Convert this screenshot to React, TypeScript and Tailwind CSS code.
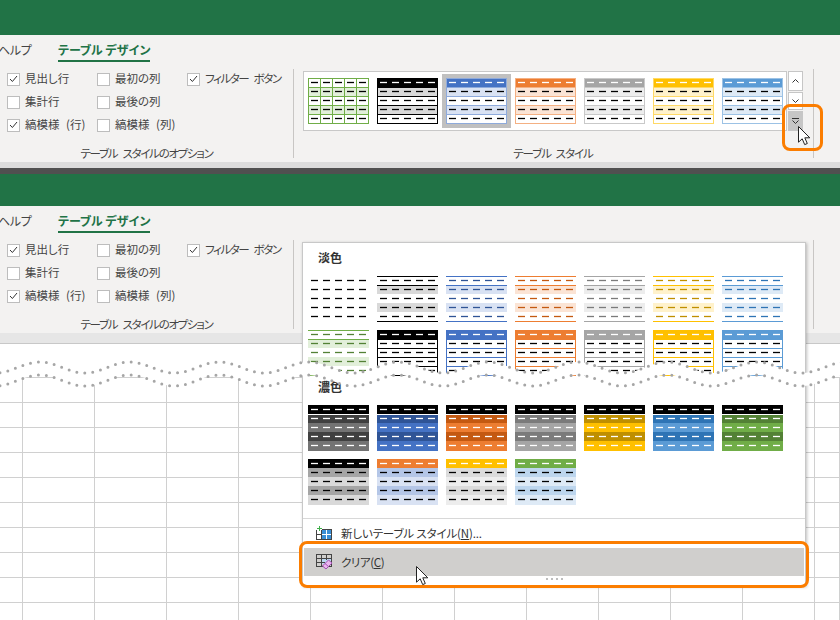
import React from "react";

interface TileProps {
  rows: string[];
  dash?: string[];
  lines?: string;
  lineAt?: number[];
  box?: string;
  grid?: boolean;
}

const ROW_Y = [0, 9, 18, 27, 36];
const ROW_H = [9, 9, 9, 9, 10];
const DASH_X = [3, 15, 27, 39, 51];

const TableTile = ({ rows, dash = [], lines, lineAt = [0, 9, 18, 27, 36, 45], box, grid }: TileProps) => (
  <svg width="61" height="46" viewBox="0 0 61 46" className="block">
    <g shapeRendering="crispEdges">
      {rows.map((fill, i) => (
        <rect key={i} x="0" y={ROW_Y[i]} width="61" height={ROW_H[i]} fill={fill} />
      ))}
      {lines && lineAt.map((y) => <rect key={y} x="0" y={y} width="61" height="1" fill={lines} />)}
      {box && (
        <>
          <rect x="0" y="0" width="1" height="46" fill={box} />
          <rect x="60" y="0" width="1" height="46" fill={box} />
        </>
      )}
      {grid && [12, 24, 36, 48].map((x) => <rect key={x} x={x} y="0" width="1" height="46" fill={lines} />)}
    </g>
    {ROW_Y.map((y, i) =>
      DASH_X.map((x) => <rect key={`${i}-${x}`} x={x} y={y + 3.85} width="7" height="1.3" fill={dash[i] ?? "#000"} />),
    )}
  </svg>
);

const W = "#ffffff";
const K = "#000000";

// header filled, inner lines, banded body
const medium = (head: string, line: string, band: string): TileProps => ({
  rows: [head, band, W, band, W],
  dash: [W, K, K, K, K],
  lines: line,
  box: line,
});

// only top, header and bottom rules
const light = (line: string, dash: string, band: string): TileProps => ({
  rows: [W, band, W, band, W],
  dash: [dash, dash, dash, dash, dash],
  lines: line,
  lineAt: [0, 9, 45],
});

const dark = (low: string, high: string): TileProps => ({
  rows: [K, low, high, low, high],
  dash: [W, W, W, W, W],
  lines: W,
  lineAt: [9],
});

const banded = (head: string, a: string, b: string): TileProps => ({
  rows: [head, a, b, a, b],
  dash: [W, K, K, K, K],
});

const GALLERY: TileProps[] = [
  { rows: [W, "#e2efda", W, "#e2efda", W], lines: "#70ad47", box: "#70ad47", grid: true },
  medium(K, K, "#d9d9d9"),
  { ...medium("#4472c4", "#8eaadb", "#d9e2f3") },
  medium("#ed7d31", "#f4b083", "#fbe4d5"),
  medium("#a5a5a5", "#c9c9c9", "#ededed"),
  medium("#ffc000", "#ffd966", "#fff2cc"),
  medium("#5b9bd5", "#9cc2e5", "#deeaf6"),
];

const LIGHT: TileProps[] = [
  { rows: [W, W, W, W, W] },
  light(K, K, "#d9d9d9"),
  light("#4472c4", "#2f5496", "#d9e2f3"),
  light("#ed7d31", "#c45911", "#fbe4d5"),
  light("#a5a5a5", "#7b7b7b", "#ededed"),
  light("#ffc000", "#bf8f00", "#fff2cc"),
  light("#5b9bd5", "#2e74b5", "#deeaf6"),
  light("#70ad47", "#538135", "#e2efda"),
  medium(K, K, W),
  medium("#4472c4", "#4472c4", W),
  medium("#ed7d31", "#ed7d31", W),
  medium("#a5a5a5", "#a5a5a5", W),
  medium("#ffc000", "#ffc000", W),
  medium("#5b9bd5", "#5b9bd5", W),
];

const DARK: TileProps[] = [
  dark("#404040", "#737373"),
  dark("#2f5496", "#4472c4"),
  dark("#c45911", "#ed7d31"),
  dark("#7b7b7b", "#a5a5a5"),
  dark("#bf8f00", "#ffc000"),
  dark("#2e74b5", "#5b9bd5"),
  dark("#538135", "#70ad47"),
  banded(K, "#a5a5a5", "#d9d9d9"),
  banded("#ed7d31", "#b4c6e7", "#d9e2f3"),
  banded("#ffc000", "#dbdbdb", "#ededed"),
  banded("#70ad47", "#bdd6ee", "#deeaf6"),
];

const CheckOption = ({ label, checked, className = "" }: { label: string; checked?: boolean; className?: string }) => (
  <div className="flex h-5 items-center gap-[5px] whitespace-nowrap">
    <span className="flex h-[13px] w-[13px] items-center justify-center border border-[#bdbdbd] bg-white">
      {checked && (
        <svg width="9" height="8" viewBox="0 0 9 8" fill="none">
          <path d="M1 4l2.4 2.5L8 1" stroke="#333" strokeWidth="1" />
        </svg>
      )}
    </span>
    <span className={className}>{label}</span>
  </div>
);

const ScrollButton = ({ h, active, children }: { h: string; active?: boolean; children: React.ReactNode }) => (
  <div className={`flex w-[15px] items-center justify-center border border-[#c6c6c6] ${h} ${active ? "bg-[#c6c6c6]" : "bg-white"}`}>
    {children}
  </div>
);

const Gallery = () => (
  <div className="mt-[2px] ml-[9px] flex">
    <div className="flex h-[60px] w-[484px] border border-[#c8c8c8] bg-white pt-[2px]">
      {GALLERY.map((t, i) => (
        <div key={i} className={`h-[54px] w-[69px] shrink-0 p-1 ${i === 2 ? "bg-[#c0c0c0]" : ""}`}>
          <TableTile {...t} />
        </div>
      ))}
    </div>
    <div className="ml-[1px] flex flex-col gap-[1px]">
      <ScrollButton h="h-[20px]">
        <svg width="7" height="4" viewBox="0 0 7 4" fill="none">
          <path d="M.5 3.5l3-3 3 3" stroke="#333" />
        </svg>
      </ScrollButton>
      <ScrollButton h="h-[18px]">
        <svg width="7" height="4" viewBox="0 0 7 4" fill="none">
          <path d="M.5.5l3 3 3-3" stroke="#333" />
        </svg>
      </ScrollButton>
      <ScrollButton h="h-[20px]" active>
        <svg width="7" height="6" viewBox="0 0 7 6" fill="none">
          <path d="M0 .5h7M.5 2.5l3 3 3-3" stroke="#333" />
        </svg>
      </ScrollButton>
    </div>
  </div>
);

const Ribbon = ({ expanded }: { expanded?: boolean }) => (
  <div className="h-[127px] overflow-hidden bg-[#f3f2f1] text-[11.5px] text-[#444]">
    <div className="flex h-[34px] items-start pt-[6px] text-[12px]">
      <span className="-ml-[2px] w-[60px] leading-[18px] tracking-[-0.3px]">ヘルプ</span>
      <span className="border-b-2 border-[#217346] pb-[1px] leading-[18px] font-bold text-[#217346]">
        テーブル デザイン
      </span>
    </div>
    <div className="flex">
      <div className="w-[293px]">
        <div className="grid grid-cols-[90px_90px_auto] gap-y-[3px] pl-[7px]">
          <CheckOption label="見出し行" checked />
          <CheckOption label="最初の列" />
          <CheckOption label="フィルター ボタン" checked className="tracking-[-1.4px] [word-spacing:4px]" />
          <CheckOption label="集計行" />
          <CheckOption label="最後の列" />
          <span />
          <CheckOption label="縞模様 (行)" checked className="[word-spacing:4px]" />
          <CheckOption label="縞模様 (列)" className="[word-spacing:4px]" />
        </div>
        <div className="mt-[9px] text-center leading-[18px] tracking-[-1.3px] [word-spacing:4px]">
          テーブル スタイルのオプション
        </div>
      </div>
      <div className="h-[89px] w-px bg-[#c8c6c4]" />
      <div className="w-[519px]">
        {!expanded && <Gallery />}
        {!expanded && (
          <div className="mt-[13px] pr-[1px] text-center leading-[18px] tracking-[-1px] [word-spacing:3px]">
            テーブル スタイル
          </div>
        )}
      </div>
      <div className="h-[89px] w-px bg-[#c8c6c4]" />
    </div>
  </div>
);

const SheetGrid = () => (
  <div className="h-[275px] border-t border-[#c8c8c8] bg-white">
    <div className="h-[34px] border-b border-[#d0d0d0]" />
    <div className="grid grid-cols-[23px_repeat(11,72px)_1fr] grid-rows-[repeat(10,25px)]">
      {Array.from({ length: 13 * 10 }).map((_, i) => (
        <div key={i} className="border-r border-b border-[#d0d0d0]" />
      ))}
    </div>
  </div>
);

const waveY = (x: number, base: number) => base - 5.5 * Math.cos(((x - 40) / 89.6) * 2 * Math.PI);
const wavePts = (base: number) => Array.from({ length: 213 }, (_, i) => [i * 4, waveY(i * 4, base)] as const);
const toPath = (pts: readonly (readonly [number, number])[]) =>
  pts.map(([x, y], i) => `${i ? "L" : "M"}${x} ${y.toFixed(2)}`).join(" ");

const WaveBreak = () => {
  const top = wavePts(367.5);
  const bottom = wavePts(380.5);
  return (
    <svg width="840" height="620" viewBox="0 0 840 620" className="pointer-events-none absolute top-0 left-0">
      <path d={`${toPath(top)} ${toPath([...bottom].reverse()).replace("M", "L")} Z`} fill="#fff" />
      <path d={toPath(top)} fill="none" stroke="#a6a6a6" strokeWidth="3" strokeLinecap="round" strokeDasharray="0 8" />
      <path d={toPath(bottom)} fill="none" stroke="#a6a6a6" strokeWidth="3" strokeLinecap="round" strokeDasharray="0 8" />
    </svg>
  );
};

const Cursor = ({ className }: { className: string }) => (
  <svg width="13" height="20" viewBox="0 0 13 20" className={`absolute ${className}`}>
    <path d="M.5.5V16.2L4.2 12.8 6.7 18.6 9.3 17.5 6.8 11.8H11.8Z" fill="#fff" stroke="#222" strokeWidth="1" />
  </svg>
);

const NewStyleIcon = () => (
  <svg width="17" height="17" viewBox="0 0 17 17" shapeRendering="crispEdges">
    <rect x="5" y="5" width="11" height="10" fill="#3a8fd6" />
    <path d="M10.5 5v10M5 9.5h11" stroke="#fff" fill="none" />
    <path d="M.5 4.5v10h15v-10H6M5 4.5v10M.5 9.5H5" stroke="#444" fill="none" />
    <path d="M1 3.5h5M3.5 1v5" stroke="#3fae49" fill="none" />
  </svg>
);

const ClearIcon = () => (
  <svg width="17" height="17" viewBox="0 0 17 17">
    <rect x="5" y="4" width="10" height="6" fill="#bcd9f2" />
    <path d="M.5 .5h15v12H.5zM.5 4.5h15M.5 8.5h8M5 .5v12M10.5 .5v5" stroke="#444" fill="none" shapeRendering="crispEdges" />
    <path d="M6.5 12l6-6 3.5 3-6 6z" fill="#e9b7ee" stroke="#a44fb4" />
    <path d="M9 9.5l3.4 3" stroke="#a44fb4" />
  </svg>
);

const StylePanel = () => (
  <div className="absolute top-[242px] left-[302px] h-[344px] w-[504px] border border-[#c8c8c8] bg-white text-[12px] text-[#333] shadow-[1px_1px_3px_rgba(0,0,0,0.25)]">
    <div className="mt-[6px] mb-[9px] pl-[15px] leading-[18px] font-bold">淡色</div>
    <div className="grid grid-cols-[repeat(7,61px)] gap-2 pl-[5px]">
      {LIGHT.map((t, i) => (
        <TableTile key={i} {...t} />
      ))}
    </div>
    <div className="mt-[2px] mb-[9px] pl-[15px] leading-[18px] font-bold">濃色</div>
    <div className="grid grid-cols-[repeat(7,61px)] gap-2 pl-[5px]">
      {DARK.map((t, i) => (
        <TableTile key={i} {...t} />
      ))}
    </div>
    <div className="mt-[13px] border-t border-[#d8d8d8]" />
    <div className="flex h-[29px] items-center pl-[13px] text-[11.5px]">
      <NewStyleIcon />
      <span className="ml-[8px] tracking-[-0.15px]">
        新しいテーブル スタイル(<span className="underline">N</span>)...
      </span>
    </div>
    <div className="ml-[1px] flex h-[28px] w-[500px] items-center bg-[#d0cfcd] pl-[12px]">
      <ClearIcon />
      <span className="ml-[8px] pt-[2px] text-[11.5px] tracking-[-0.4px]">
        クリア(<span className="underline">C</span>)
      </span>
    </div>
    <div className="flex h-[6px] items-center justify-center gap-[3px]">
      {[0, 1, 2, 3].map((i) => (
        <span key={i} className="h-[2px] w-[2px] bg-[#bdbdbd]" />
      ))}
    </div>
  </div>
);

export default function App() {
  return (
    <div className="relative h-[620px] w-[840px] overflow-hidden bg-white font-['Noto_Sans_CJK_JP','Liberation_Sans',sans-serif] [font-feature-settings:'palt']">
      <div className="h-[35px] bg-[#217346]" />
      <Ribbon />
      <div className="h-[6px] bg-[#dcdcdc]" />
      <div className="h-[6px] bg-[#505050]" />
      <div className="h-[32px] bg-[#217346]" />
      <Ribbon expanded />
      <div className="h-[10px] bg-[#e6e6e6]" />
      <SheetGrid />

      <StylePanel />
      <WaveBreak />

      <div className="absolute top-[104px] left-[782px] h-[47px] w-[41px] rounded-lg border-[3px] border-[#fb7d00]" />
      <div className="absolute top-[541px] left-[299px] h-[47px] w-[510px] rounded-lg border-[3px] border-[#fb7d00]" />
      <Cursor className="top-[126px] left-[798px]" />
      <Cursor className="top-[566px] left-[416px]" />
    </div>
  );
}
